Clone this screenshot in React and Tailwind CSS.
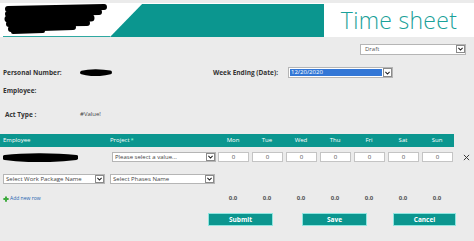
import React from 'react';

const teal = 'bg-[#0b968f]';

function Chevron() {
  return (
    <svg viewBox="0 0 10 10" width="8" height="8">
      <path d="M2 3.5 L5 6.5 L8 3.5" fill="none" stroke="#222" strokeWidth="1.6" />
    </svg>
  );
}

// plain dropdown as drawn by the old web part
function Select({ text, className = '', textClass = 'text-[#444]' }) {
  return (
    <div className={`flex h-[10px] bg-white border border-[#b5b5b5] ${className}`}>
      <span className={`flex-1 pl-[2px] text-[6px] leading-[8px] truncate ${textClass}`}>{text}</span>
      <span className="w-[9px] h-[8px] border border-[#8a8a8a] bg-white flex items-center justify-center">
        <Chevron />
      </span>
    </div>
  );
}

function Scribble({ w, h, className = '' }) {
  return (
    <svg width={w} height={h} viewBox={`0 0 ${w} ${h}`} className={className}>
      <path
        d={`M2 ${h / 2} C ${w * 0.3} ${h * 0.2}, ${w * 0.7} ${h * 0.25}, ${w - 2} ${h / 2} C ${w * 0.7} ${h * 0.8}, ${w * 0.3} ${h * 0.85}, 2 ${h / 2} Z`}
        fill="#000"
        stroke="#000"
        strokeWidth={h * 0.55}
        strokeLinejoin="round"
      />
    </svg>
  );
}

const days = ['Mon', 'Tue', 'Wed', 'Thu', 'Fri', 'Sat', 'Sun'];
const cols = 'grid grid-cols-[108px_108px_repeat(7,34px)_20px]';

export default function App() {
  return (
    <div className="w-[474px] h-[241px] bg-[#ebebeb] overflow-hidden font-['Open_Sans',sans-serif] text-[#333]">
      {/* header band */}
      <div className="pt-[3px]">
        <div className="flex h-[34px] bg-white">
          <div className="ml-[3px] w-[107px] border-b border-[#2fa8a1] flex items-center">
            <svg width="106" height="31" viewBox="0 0 106 31">
              <g stroke="#000" strokeLinecap="round" fill="none">
                <path d="M5 5 L101 3" strokeWidth="6" />
                <path d="M5 10 L96 8" strokeWidth="6" />
                <path d="M5 15 L88 14" strokeWidth="7" />
                <path d="M6 20 L84 19" strokeWidth="6" />
                <path d="M8 25 L70 23" strokeWidth="6" />
                <path d="M10 28 L40 27" strokeWidth="4" />
              </g>
            </svg>
          </div>
          <div className={`w-[214px] h-[33px] self-end ${teal} [clip-path:polygon(15%_0,100%_0,100%_100%,0_100%)]`} />
          <div className="flex-1 flex items-center justify-center pt-[1px] text-[23px] font-light text-[#1aa199] tracking-[0.3px]">
            Time sheet
          </div>
        </div>
      </div>

      {/* status */}
      <div className="mt-[7px] flex justify-end pr-[8px]">
        <Select text="Draft" className="w-[106px] h-[11px]" textClass="text-[#555] pl-[4px]" />
      </div>

      {/* personal number / week ending */}
      <div className="mt-[12px] h-[11px] flex items-center pl-[3px] text-[6.5px] font-bold">
        <span className="w-[77px]">Personal Number:</span>
        <Scribble w={32} h={7} />
        <span className="w-[101px]" />
        <span className="w-[75px]">Week Ending (Date):</span>
        <div className="flex w-[105px] h-[11px] bg-white border border-[#b5b5b5]">
          <span className="flex-1 m-[1px] bg-[#3377d6] text-white text-[6px] leading-[7px] pl-[1px] font-normal">12/20/2020</span>
          <span className="w-[9px] h-[9px] border border-[#8a8a8a] flex items-center justify-center">
            <Chevron />
          </span>
        </div>
      </div>

      <div className="mt-[7px] h-[11px] flex items-center pl-[3px] text-[6.5px] font-bold">Employee:</div>

      <div className="mt-[13px] h-[11px] flex items-center pl-[5px] text-[6.5px]">
        <span className="w-[75px] font-bold">Act Type :</span>
        <span className="text-[6px] text-[#444]">#Value!</span>
      </div>

      {/* grid header */}
      <div className={`mt-[14px] ${cols} h-[13px] text-[6px] text-white items-center`}>
        <div className={`${teal} h-full pl-[3px] flex items-center`}>Employee</div>
        <div className={`${teal} h-full pl-[2px] flex items-center`}>Project <span className="text-[#9fd] ml-[1px]">*</span></div>
        {days.map((d) => (
          <div key={d} className={`${teal} h-full flex items-center justify-center`}>{d}</div>
        ))}
        <div />
      </div>

      {/* row 1 */}
      <div className={`mt-[5px] ${cols} h-[10px] items-center`}>
        <div className="pl-[3px]">
          <Scribble w={75} h={9} />
        </div>
        <div className="pl-[4px]">
          <Select text="Please select a value..." className="w-[104px]" />
        </div>
        {days.map((d) => (
          <div key={d} className="pl-[2px]">
            <div className="w-[31px] h-[10px] bg-white border border-[#c4c4c4] text-[6px] leading-[8px] text-center text-[#444]">0</div>
          </div>
        ))}
        <div className="flex justify-center pl-[4px]">
          <svg viewBox="0 0 8 8" width="7" height="7">
            <path d="M1 1 L7 7 M7 1 L1 7" stroke="#333" strokeWidth="1.1" />
          </svg>
        </div>
      </div>

      {/* row 2 */}
      <div className="mt-[12px] flex h-[10px] pl-[3px]">
        <Select text="Select Work Package Name" className="w-[102px]" />
        <Select text="Select Phases Name" className="ml-[5px] w-[105px]" />
      </div>

      {/* add row + totals */}
      <div className={`mt-[10px] ${cols} h-[8px] items-center`}>
        <div className="col-span-2 pl-[3px] flex items-center gap-[1px]">
          <svg viewBox="0 0 8 8" width="6" height="6">
            <path d="M4 0.5 L4 7.5 M0.5 4 L7.5 4" stroke="#3daa3d" strokeWidth="2.6" />
          </svg>
          <span className="text-[5px] text-[#1b5fb0]">Add new row</span>
        </div>
        {days.map((d) => (
          <div key={d} className="text-[6px] font-bold text-[#555] text-center">0.0</div>
        ))}
      </div>

      {/* actions */}
      <div className="mt-[11px] flex h-[13px] pl-[208px] text-[6.5px] font-bold text-white">
        <button className={`w-[65px] ${teal} border border-[#8ee6e0]`}>Submit</button>
        <button className={`ml-[29px] w-[65px] ${teal} border border-[#8ee6e0]`}>Save</button>
        <button className={`ml-[26px] w-[63px] ${teal} border border-[#8ee6e0]`}>Cancel</button>
      </div>
    </div>
  );
}
